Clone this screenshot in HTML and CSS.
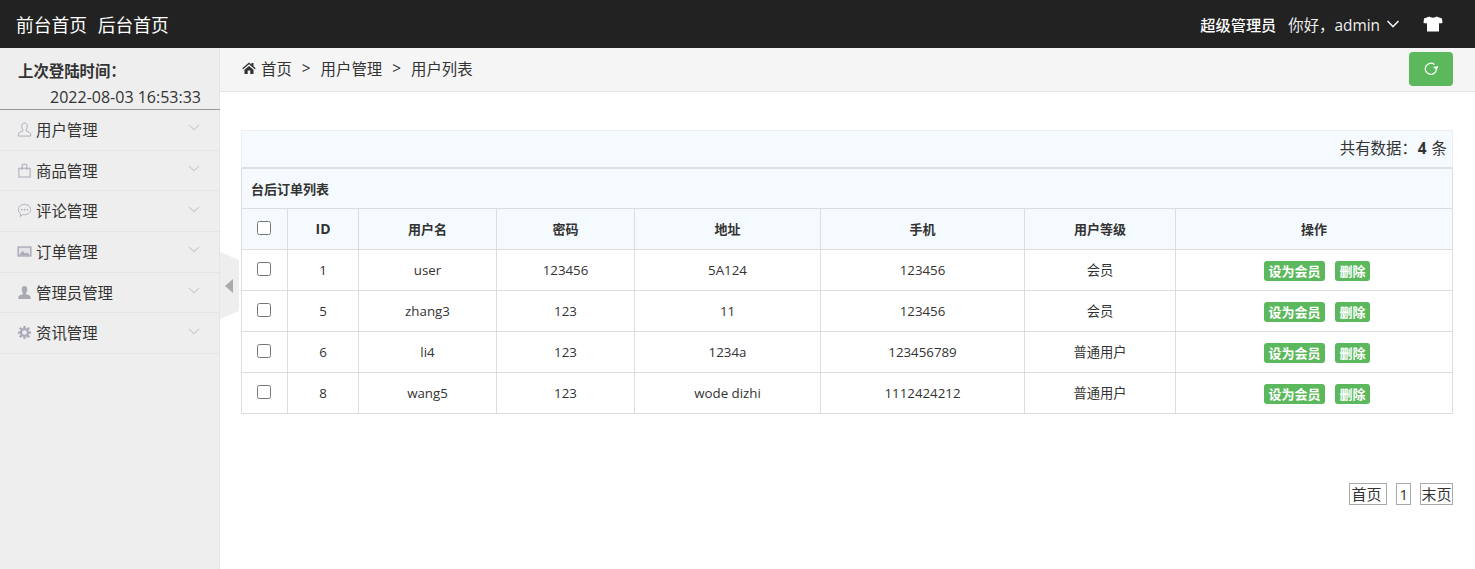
FILE: index.html
```html
<!DOCTYPE html>
<html lang="zh">
<head>
<meta charset="utf-8">
<title>用户列表</title>
<link rel="stylesheet" href="styles.css">
</head>
<body>
<header class="topbar">
  <nav class="topnav"><a>前台首页</a><a>后台首页</a></nav>
  <div class="userbox">
    <span class="role">超级管理员</span>
    <span class="hello">你好，admin</span>
    <svg class="caret" width="14" height="8" viewBox="0 0 14 8"><path d="M1.500 1l5.500 5.500L12.500 1" fill="none" stroke="#eee" stroke-width="1.600"/></svg>
    <svg class="shirt" width="20" height="16" viewBox="0 0 20 16"><path d="M6.500 0.500L1 2.500 0.500 7l3 .5 .5-1V15.500h12V6.500l.5 1 3-.5L19 2.500 13.500 0.500C12.500 2 7.500 2 6.500 0.500z" fill="#fff"/></svg>
  </div>
</header>
<div class="main">
  <aside class="sidebar">
    <div class="login">
      <div class="login-label">上次登陆时间：</div>
      <div class="login-time">2022-08-03 16:53:33</div>
    </div>
    <ul class="menu">
      <li><svg class="mi" viewBox="0 0 16 16"><path d="M8 1c2 0 3 1.500 3 3.500S10 8 9.500 9c0 1 4.500 1.500 5 3.500V15H1.500v-2.500C2 10.500 6.500 10 6.500 9 6 8 5 6.500 5 4.500S6 1 8 1z" fill="none" stroke="#aab" stroke-width="1"/></svg><span>用户管理</span><svg class="chev" viewBox="0 0 14 8"><path d="M1 1l6 5.500L13 1" fill="none" stroke="#ccc" stroke-width="1.300"/></svg></li>
      <li><svg class="mi" viewBox="0 0 16 16"><path d="M2 5.500h12V15H2z M5.500 7.500V3c0-2.500 5-2.500 5 0v4.500" fill="none" stroke="#aab" stroke-width="1.100"/></svg><span>商品管理</span><svg class="chev" viewBox="0 0 14 8"><path d="M1 1l6 5.500L13 1" fill="none" stroke="#ccc" stroke-width="1.300"/></svg></li>
      <li><svg class="mi" viewBox="0 0 16 16"><path d="M8 1.500c3.600 0 6.500 2.300 6.500 5.500S11.600 12.500 8 12.500c-.8 0-1.500-.1-2 -.2L3.500 14.500l.2-3C2.400 10.500 1.500 9 1.500 7c0-3.200 2.900-5.500 6.500-5.500z" fill="none" stroke="#aab" stroke-width="1"/><circle cx="5" cy="7" r=".9" fill="#aab"/><circle cx="8" cy="7" r=".9" fill="#aab"/><circle cx="11" cy="7" r=".9" fill="#aab"/></svg><span>评论管理</span><svg class="chev" viewBox="0 0 14 8"><path d="M1 1l6 5.500L13 1" fill="none" stroke="#ccc" stroke-width="1.300"/></svg></li>
      <li><svg class="mi" viewBox="0 0 16 16"><path d="M0.500 2.500h15v11H.5z" fill="#aab"/><path d="M2 4h12v8H2z" fill="#e4e4e8"/><path d="M2 12l4-4.500 3 3 2-1.500 3 3z" fill="#aab"/></svg><span>订单管理</span><svg class="chev" viewBox="0 0 14 8"><path d="M1 1l6 5.500L13 1" fill="none" stroke="#ccc" stroke-width="1.300"/></svg></li>
      <li><svg class="mi" viewBox="0 0 16 16"><path d="M8 1c2 0 3 1.500 3 3.500S10 8 9.500 9c0 1 4.500 1.500 5 3.500V15H1.500v-2.500C2 10.500 6.500 10 6.500 9 6 8 5 6.500 5 4.500S6 1 8 1z" fill="#a8aab4"/></svg><span>管理员管理</span><svg class="chev" viewBox="0 0 14 8"><path d="M1 1l6 5.500L13 1" fill="none" stroke="#ccc" stroke-width="1.300"/></svg></li>
      <li><svg class="mi" viewBox="0 0 16 16"><circle cx="8" cy="8" r="3.700" fill="none" stroke="#aab" stroke-width="2.400"/><path d="M8 1v14M1 8h14M3 3l10 10M13 3L3 13" stroke="#aab" stroke-width="2.400" stroke-dasharray="2.600 8.800 2.600 0"/></svg><span>资讯管理</span><svg class="chev" viewBox="0 0 14 8"><path d="M1 1l6 5.500L13 1" fill="none" stroke="#ccc" stroke-width="1.300"/></svg></li>
    </ul>
    <div class="toggle"><i class="toggle-arrow"></i></div>
  </aside>
  <section class="page">
    <div class="crumbs">
      <svg class="home" width="14" height="12" viewBox="0 0 14 12"><path d="M7 0.500L0.300 6.200l.9 1L7 2.300l5.800 4.900.9-1L11.500 4.300V1h-2v1.600z M2.500 7.800L7 3.900l4.500 3.900V12H8.300V8.500H5.700V12H2.500z" fill="#333"/></svg>
      <span>首页</span><span class="sep">&gt;</span><span>用户管理</span><span class="sep">&gt;</span><span>用户列表</span>
      <button class="refresh"><svg width="16" height="16" viewBox="0 0 14 14"><path d="M11.800 7A4.900 4.900 0 1 1 10 3" fill="none" stroke="#fff" stroke-width="1.100"/><path d="M8.800 4.800L13.600 5 11.800 8z" fill="#fff" transform="rotate(-12 11 6)"/></svg></button>
    </div>
    <div class="content">
      <div class="count">共有数据：<strong>4</strong> 条</div>
      <table class="grid">
        <colgroup><col class="c1"><col class="c2"><col class="c3"><col class="c4"><col class="c5"><col class="c6"><col class="c7"><col class="c8"></colgroup>
        <thead>
          <tr><th colspan="8" class="caption">台后订单列表</th></tr>
          <tr><th><input type="checkbox" class="ck"></th><th class="th-id">ID</th><th>用户名</th><th>密码</th><th>地址</th><th>手机</th><th>用户等级</th><th>操作</th></tr>
        </thead>
        <tbody>
          <tr><td><input type="checkbox" class="ck"></td><td>1</td><td>user</td><td>123456</td><td>5A124</td><td>123456</td><td>会员</td><td><a class="tag">设为会员</a><a class="tag">删除</a></td></tr>
          <tr><td><input type="checkbox" class="ck"></td><td>5</td><td>zhang3</td><td>123</td><td>11</td><td>123456</td><td>会员</td><td><a class="tag">设为会员</a><a class="tag">删除</a></td></tr>
          <tr><td><input type="checkbox" class="ck"></td><td>6</td><td>li4</td><td>123</td><td>1234a</td><td>123456789</td><td>普通用户</td><td><a class="tag">设为会员</a><a class="tag">删除</a></td></tr>
          <tr><td><input type="checkbox" class="ck"></td><td>8</td><td>wang5</td><td>123</td><td>wode dizhi</td><td>1112424212</td><td>普通用户</td><td><a class="tag">设为会员</a><a class="tag">删除</a></td></tr>
        </tbody>
      </table>
      <div class="pager"><a>首页</a><a>1</a><a>末页</a></div>
    </div>
  </section>
</div>
</body>
</html>
```
FILE: styles.css
```css
* { box-sizing: border-box; }
html, body { margin: 0; height: 100%; overflow: hidden; }
body {
  font-family: "Open Sans", "Noto Sans CJK SC", sans-serif;
  font-size: 15.4px;
  color: #333;
  background: #fff;
}
.topbar {
  height: 48px;
  background: #222;
  display: flex;
  align-items: center;
  justify-content: space-between;
  padding: 0 32px 0 16px;
  color: #fff;
}
.topnav { display: flex; gap: 10.500px; font-size: 17.800px; }
.userbox { display: flex; align-items: center; }
.role { margin-right: 12px; font-weight: 500; font-size: 15.200px; }
.hello { color: #eee; }
.caret { margin: 0 0 0 6px; }
.shirt { margin-left: 23px; }
.main { display: flex; height: 521px; }
.sidebar {
  position: relative;
  width: 220px;
  flex: none;
  background: #eee;
  border-right: 1px solid #e5e5e5;
}
.login { height: 62px; padding: 14px 19px 0 18px; border-bottom: 1px solid #999; margin-right: -1px; }
.login-label { font-weight: 600; line-height: 20px; }
.login-time { text-align: right; line-height: 20px; margin-top: 5px; font-size: 16px; }
.menu { list-style: none; margin: 0; padding: 0; }
.menu li {
  height: 40.700px;
  display: flex;
  align-items: center;
  padding: 0 19px 1px 17px;
  border-bottom: 1px solid #e5e5e5;
}
.mi { width: 15px; height: 15px; margin-right: 4px; flex: none; }
.menu span { flex: 1; }
.chev { width: 12px; height: 7px; margin: -3px 0 0; flex: none; }
.toggle {
  position: absolute;
  left: 220px;
  top: 204px;
  width: 19px;
  height: 67px;
  background: #eee;
  clip-path: polygon(0 0, 100% 12%, 100% 88%, 0 100%);
  display: flex;
  align-items: center;
  justify-content: center;
}
.toggle-arrow {
  width: 0;
  height: 0;
  border-style: solid;
  border-width: 7.500px 8px 7.500px 0;
  border-color: transparent #aaa transparent transparent;
  margin-right: 2px;
}
.page { flex: 1; min-width: 0; }
.crumbs {
  height: 44px;
  background: #f5f5f5;
  border-bottom: 1px solid #e5e5e5;
  display: flex;
  align-items: center;
  padding: 0 22px 3px 22px;
}
.home { margin-right: 5px; }
.sep { margin: 0 10px; }
.refresh {
  margin-left: auto;
  margin-top: 2px;
  width: 44px;
  height: 34px;
  background: #5cb85c;
  border: 0;
  border-radius: 4px;
  padding: 0;
  display: flex;
  align-items: center;
  justify-content: center;
}
.content { padding: 38px 22px 0 21px; }
.count {
  height: 39px;
  line-height: 36px;
  text-align: right;
  padding-right: 5px;
  background: #f5fafe;
  border: 1px solid #eee;
  border-bottom: 2px solid #e0e0e0;
}
.count strong { margin: 0 1px; }
.grid {
  width: 1211px;
  table-layout: fixed;
  border-collapse: collapse;
  font-size: 13.300px;
}
.c1 { width: 46px; }
.c2 { width: 71px; }
.c3 { width: 138px; }
.c4 { width: 138px; }
.c5 { width: 186px; }
.c6 { width: 204px; }
.c7 { width: 151px; }
.c8 { width: 277px; }
.grid th, .grid td {
  border: 1px solid #ddd;
  text-align: center;
  height: 41px;
  padding: 0;
}
.grid th { background: #f5fafe; font-weight: 600; font-size: 13px; }
.grid th.th-id { font-size: 14px; font-weight: 700; }
.grid th.caption { height: 39px; text-align: left; padding-left: 9px; border-top: 0; }
.grid td { vertical-align: middle; }
.ck { width: 14px; height: 14px; margin: 0 1px 0 0; vertical-align: middle; position: relative; top: -2px; }
.tag {
  display: inline-block;
  background: #5cb85c;
  color: #fff;
  font-size: 13px;
  font-weight: 700;
  line-height: 20px;
  padding: 0 4.500px;
  border-radius: 3px;
  margin: 2px 5px 0;
}
.tag:first-child { margin-left: 11px; }
.pager { display: flex; justify-content: flex-end; gap: 8.500px; margin-top: 69px; font-size: 15px; }
.pager a {
  border: 1px solid #aaa;
  height: 22px;
  line-height: 20px;
  padding: 0 .5px;
  color: #333;
}
.pager a:first-child { padding: 0 5px 0 1px; }
.pager a:nth-child(2) { padding: 0 2.500px; }
```
